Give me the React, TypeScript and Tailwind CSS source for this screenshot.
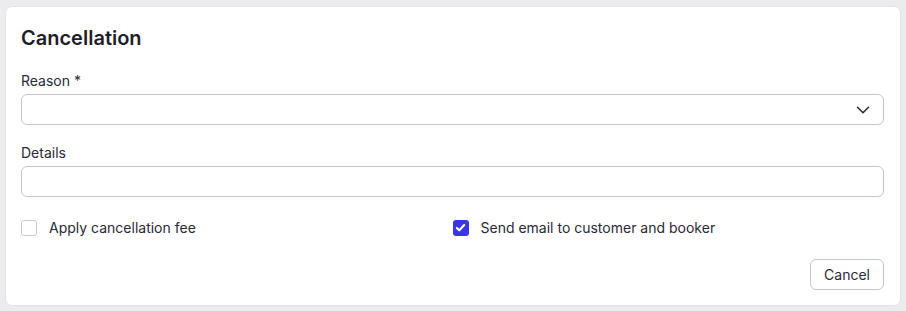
import { ChevronDown } from 'lucide-react';

function Checkbox({ checked, label }: { checked?: boolean; label: string }) {
  return (
    <label className="flex items-center gap-3 text-[14px] text-[#2b2838]">
      {checked ? (
        <span className="flex h-4 w-4 items-center justify-center rounded-[3px] bg-[#3b35e3]">
          <svg viewBox="0 0 16 16" className="h-[13px] w-[13px]" fill="none">
            <path d="M3.5 8.5l3 3 6-6.5" stroke="white" strokeWidth="2.6" strokeLinecap="round" strokeLinejoin="round" />
          </svg>
        </span>
      ) : (
        <span className="h-4 w-4 rounded-[3px] border border-[#c9c7d6] bg-white" />
      )}
      <span>{label}</span>
    </label>
  );
}

export default function App() {
  return (
    <div
      className="h-[311px] w-[906px] bg-[#ececef] px-[5px] pt-[6px] pb-[5px]"
      style={{ fontFamily: 'Inter, "Noto Sans", sans-serif' }}
    >
      <div className="flex h-full flex-col rounded-[7px] border border-[#e3e2ea] bg-white pl-[15px] pr-[16px] pt-[17px] pb-[15px]">
        <h2 className="text-[20px] leading-7 font-semibold text-[#1f1d2b]">Cancellation</h2>

        <div className="mt-[19px] flex flex-col gap-[3px]">
          <span className="text-[14px] leading-5 text-[#2b2838]">
            Reason <span className="text-[#2b2838]">*</span>
          </span>
          <button className="flex h-[31px] w-full items-center justify-end rounded-[6px] border border-[#c6c3d9] bg-white px-[9px]">
            <ChevronDown className="h-[22px] w-[22px] text-[#2b2838]" strokeWidth={1.7} />
          </button>
        </div>

        <div className="mt-[18px] flex flex-col gap-[3px]">
          <span className="text-[14px] leading-5 text-[#2b2838]">Details</span>
          <input className="h-[31px] w-full rounded-[6px] border border-[#c6c3d9] bg-white px-3 outline-none" />
        </div>

        <div className="mt-[20px] grid grid-cols-2">
          <Checkbox label="Apply cancellation fee" />
          <Checkbox checked label="Send email to customer and booker" />
        </div>

        <div className="mt-auto flex justify-end">
          <button className="h-[31px] rounded-[6px] border border-[#c6c3d9] bg-white px-[13px] text-[14px] text-[#2b2838]">
            Cancel
          </button>
        </div>
      </div>
    </div>
  );
}
